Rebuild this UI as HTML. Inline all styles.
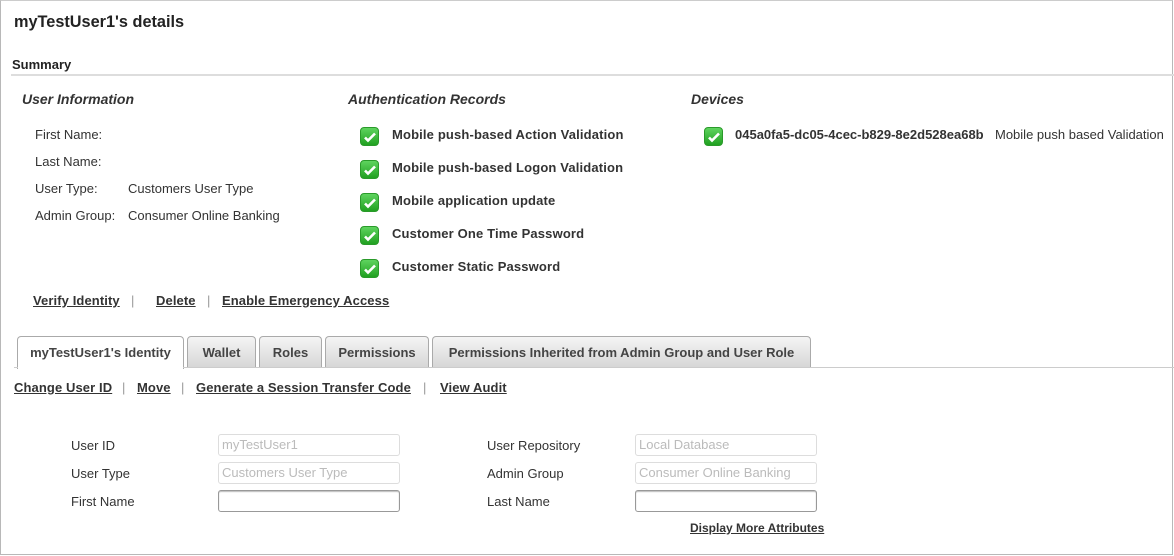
<!DOCTYPE html>
<html><head><meta charset="utf-8"><style>
*{margin:0;padding:0;box-sizing:border-box}
body{width:1174px;height:556px;background:#fff;font-family:"Liberation Sans",Arial,sans-serif;color:#333;position:relative;overflow:hidden;font-size:12px}
.frame{position:absolute;left:0;top:0;width:1173px;height:555px;border:1px solid #b8b8b8;border-top:1px solid #ccc}
.a{position:absolute;white-space:nowrap}
.b{font-weight:bold}
.h3{font-weight:bold;font-style:italic;font-size:14px;color:#333}
.lk{font-weight:bold;text-decoration:underline;color:#333;font-size:13px;letter-spacing:0.1px}
.sep{color:#999;font-size:13px}
.chk{position:absolute;width:19px;height:19px;border-radius:4px;background:linear-gradient(#5ed35e,#21a021);border:1px solid #2a9a2a}
.chk svg{position:absolute;left:2px;top:2px}
.tab{position:absolute;top:336px;height:32px;border:1px solid #aaa;border-bottom:none;border-radius:4px 4px 0 0;background:linear-gradient(#f5f5f5,#d6d6d6);font-weight:bold;font-size:13px;color:#444;text-align:center;line-height:31px}
.inp{position:absolute;width:182px;height:22px;border:1px solid #ddd;border-radius:3px;font-size:13px;color:#bbb;padding-left:3px;line-height:20px}
.lbl{position:absolute;font-size:13px;color:#333}
.ar{font-size:13px;letter-spacing:0.15px}
</style></head><body>
<div class="frame"></div>
<div class="a b" style="left:14px;top:13px;font-size:16.3px;color:#222">myTestUser1's details</div>
<div class="a b" style="left:12px;top:57px;font-size:13px;color:#222">Summary</div>
<div class="a" style="left:11px;top:74px;width:1163px;height:2px;background:#ddd"></div>

<div class="a h3" style="left:22px;top:91px">User Information</div>
<div class="a h3" style="left:348px;top:91px">Authentication Records</div>
<div class="a h3" style="left:691px;top:91px">Devices</div>

<div class="lbl" style="left:35px;top:127px">First Name:</div>
<div class="lbl" style="left:35px;top:154px">Last Name:</div>
<div class="lbl" style="left:35px;top:181px">User Type:</div>
<div class="lbl" style="left:128px;top:181px">Customers User Type</div>
<div class="lbl" style="left:35px;top:208px">Admin Group:</div>
<div class="lbl" style="left:128px;top:208px">Consumer Online Banking</div>

<div class="chk" style="left:360px;top:127px"><svg width="14" height="14" viewBox="0 0 14 14"><path d="M2 7.5l3 3 7-7" stroke="#fff" stroke-width="2.6" fill="none"/></svg></div>
<div class="a b ar" style="left:392px;top:127px">Mobile push-based Action Validation</div>
<div class="chk" style="left:360px;top:160px"><svg width="14" height="14" viewBox="0 0 14 14"><path d="M2 7.5l3 3 7-7" stroke="#fff" stroke-width="2.6" fill="none"/></svg></div>
<div class="a b ar" style="left:392px;top:160px">Mobile push-based Logon Validation</div>
<div class="chk" style="left:360px;top:193px"><svg width="14" height="14" viewBox="0 0 14 14"><path d="M2 7.5l3 3 7-7" stroke="#fff" stroke-width="2.6" fill="none"/></svg></div>
<div class="a b ar" style="left:392px;top:193px">Mobile application update</div>
<div class="chk" style="left:360px;top:226px"><svg width="14" height="14" viewBox="0 0 14 14"><path d="M2 7.5l3 3 7-7" stroke="#fff" stroke-width="2.6" fill="none"/></svg></div>
<div class="a b ar" style="left:392px;top:226px">Customer One Time Password</div>
<div class="chk" style="left:360px;top:259px"><svg width="14" height="14" viewBox="0 0 14 14"><path d="M2 7.5l3 3 7-7" stroke="#fff" stroke-width="2.6" fill="none"/></svg></div>
<div class="a b ar" style="left:392px;top:259px">Customer Static Password</div>

<div class="chk" style="left:704px;top:127px"><svg width="14" height="14" viewBox="0 0 14 14"><path d="M2 7.5l3 3 7-7" stroke="#fff" stroke-width="2.6" fill="none"/></svg></div>
<div class="a b" style="left:735px;top:127px;font-size:13px">045a0fa5-dc05-4cec-b829-8e2d528ea68b</div>
<div class="a" style="left:995px;top:127px;font-size:13px">Mobile push based Validation</div>

<div class="a lk" style="left:33px;top:293px">Verify Identity</div>
<div class="a sep" style="left:131px;top:293px">|</div>
<div class="a lk" style="left:156px;top:293px">Delete</div>
<div class="a sep" style="left:207px;top:293px">|</div>
<div class="a lk" style="left:222px;top:293px">Enable Emergency Access</div>

<div class="tab" style="left:17px;width:167px;background:#fff;height:33px;color:#444">myTestUser1's Identity</div>
<div class="tab" style="left:187px;width:69px">Wallet</div>
<div class="tab" style="left:259px;width:63px">Roles</div>
<div class="tab" style="left:325px;width:104px">Permissions</div>
<div class="tab" style="left:432px;width:379px">Permissions Inherited from Admin Group and User Role</div>
<div class="a" style="left:14px;top:367px;width:1160px;height:1px;background:#ccc"></div>
<div class="a" style="left:18px;top:367px;width:165px;height:1px;background:#fff"></div>

<div class="a lk" style="left:14px;top:380px">Change User ID</div>
<div class="a sep" style="left:122px;top:380px">|</div>
<div class="a lk" style="left:137px;top:380px">Move</div>
<div class="a sep" style="left:181px;top:380px">|</div>
<div class="a lk" style="left:196px;top:380px">Generate a Session Transfer Code</div>
<div class="a sep" style="left:423px;top:380px">|</div>
<div class="a lk" style="left:440px;top:380px">View Audit</div>

<div class="lbl" style="left:71px;top:438px">User ID</div>
<div class="lbl" style="left:71px;top:466px">User Type</div>
<div class="lbl" style="left:71px;top:494px">First Name</div>
<div class="inp" style="left:218px;top:434px">myTestUser1</div>
<div class="inp" style="left:218px;top:462px">Customers User Type</div>
<div class="inp" style="left:218px;top:490px;border:1px solid #999;box-shadow:inset 0 1px 1px #bbb"></div>

<div class="lbl" style="left:487px;top:438px">User Repository</div>
<div class="lbl" style="left:487px;top:466px">Admin Group</div>
<div class="lbl" style="left:487px;top:494px">Last Name</div>
<div class="inp" style="left:635px;top:434px">Local Database</div>
<div class="inp" style="left:635px;top:462px">Consumer Online Banking</div>
<div class="inp" style="left:635px;top:490px;border:1px solid #999;box-shadow:inset 0 1px 1px #bbb"></div>

<div class="a lk" style="left:690px;top:521px;font-size:12px;letter-spacing:0">Display More Attributes</div>
</body></html>
